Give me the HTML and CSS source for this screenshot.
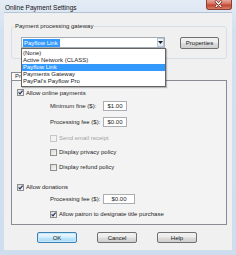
FILE: index.html
```html
<!DOCTYPE html>
<html>
<head>
<meta charset="utf-8">
<title>Online Payment Settings</title>
<link rel="stylesheet" href="styles.css">
</head>
<body>
<div class="window">
  <div class="titlebar">
    <span class="title">Online Payment Settings</span>
    <div class="close">
      <svg width="26" height="10" viewBox="0 0 26 10">
        <path d="M10.5 2.5 L15.5 7.5 M15.5 2.5 L10.5 7.5" stroke="#5a1a12" stroke-width="2.6" stroke-linecap="round"/>
        <path d="M10.5 2.5 L15.5 7.5 M15.5 2.5 L10.5 7.5" stroke="#ffffff" stroke-width="1.4" stroke-linecap="round"/>
      </svg>
    </div>
  </div>
  <div class="client">
    <fieldset class="group">
      <legend class="group-label">Payment processing gateway</legend>
      <div class="gw-row">
        <div class="combo">
          <div class="combo-field"><span class="combo-sel">Payflow Link</span></div>
          <div class="combo-btn">
            <svg width="5" height="3" viewBox="0 0 5 3"><path d="M0 0 H5 L2.5 3 Z" fill="#1b1b1b"/></svg>
          </div>
          <ul class="combo-list">
            <li>(None)</li>
            <li>Active Network (CLASS)</li>
            <li class="hl">Payflow Link</li>
            <li>Payments Gateway</li>
            <li>PayPal's Payflow Pro</li>
          </ul>
        </div>
        <button class="btn props">Properties</button>
      </div>
    </fieldset>

    <div class="tabs">
      <div class="tab-strip"><div class="tab">Processing</div></div>
      <div class="tab-body">
        <div class="row r-a">
          <span class="cb on"><svg width="5" height="5" viewBox="0 0 5 5"><path d="M0.6 2.4 L2 3.9 L4.6 0.6" fill="none" stroke="#1d2e5c" stroke-width="1.1"/></svg></span>
          <span class="lbl">Allow online payments</span>
        </div>
        <div class="row r-b indent">
          <span class="field-lbl">Minimum fine ($):</span>
          <span class="tb">$1.00</span>
        </div>
        <div class="row r-c indent">
          <span class="field-lbl">Processing fee ($):</span>
          <span class="tb">$0.00</span>
        </div>
        <div class="row r-d indent">
          <span class="cb disabled"></span>
          <span class="lbl muted">Send email receipt</span>
        </div>
        <div class="row r-e indent">
          <span class="cb"></span>
          <span class="lbl">Display privacy policy</span>
        </div>
        <div class="row r-f indent">
          <span class="cb"></span>
          <span class="lbl">Display refund policy</span>
        </div>
        <div class="row r-g">
          <span class="cb on"><svg width="5" height="5" viewBox="0 0 5 5"><path d="M0.6 2.4 L2 3.9 L4.6 0.6" fill="none" stroke="#1d2e5c" stroke-width="1.1"/></svg></span>
          <span class="lbl">Allow donations</span>
        </div>
        <div class="row r-h indent">
          <span class="field-lbl">Processing fee ($):</span>
          <span class="tb wide">$0.00</span>
        </div>
        <div class="row r-i indent">
          <span class="cb on"><svg width="5" height="5" viewBox="0 0 5 5"><path d="M0.6 2.4 L2 3.9 L4.6 0.6" fill="none" stroke="#1d2e5c" stroke-width="1.1"/></svg></span>
          <span class="lbl">Allow patron to designate title purchase</span>
        </div>
      </div>
    </div>

    <div class="buttons">
      <button class="btn default">OK</button>
      <button class="btn">Cancel</button>
      <button class="btn">Help</button>
    </div>
  </div>
</div>
</body>
</html>
```

FILE: styles.css
```css
html, body {
  margin: 0;
  padding: 0;
  background: #d3e1f0;
}

.window {
  width: 236px;
  height: 255px;
  display: flex;
  flex-direction: column;
  background: linear-gradient(#e4ecf5, #d3e1f0 30px, #cfdeee);
  font-family: "Liberation Sans", Arial, sans-serif;
  font-size: 6px;
  line-height: 8px;
  color: #1e1e1e;
  overflow: hidden;
}

.titlebar {
  height: 12px;
  flex: none;
  display: flex;
  align-items: flex-start;
  padding: 0 4px 0 5px;
}

.title {
  flex: 1;
  padding-top: 4px;
  font-size: 6.5px;
  line-height: 8px;
  color: #111;
}

.close {
  width: 26px;
  height: 10px;
  box-sizing: border-box;
  border: 1px solid #8c3f33;
  border-top: none;
  border-radius: 0 0 3px 3px;
  background: linear-gradient(#e8a99c, #d4705d 45%, #c2432d 55%, #d7806a);
  display: flex;
}

.close svg {
  margin-left: -1px;
  margin-top: -1px;
}

.client {
  flex: 1;
  margin: 0 4px 5px 4px;
  background: #f0f0f0;
  border-top: 1px solid #b4c4d6;
  display: flex;
  flex-direction: column;
}

/* Group box */
.group {
  margin: 9px 0 0 7px;
  width: 216px;
  box-sizing: border-box;
  padding: 7px 0 9px 2px;
  border: 1px solid #d5dfe5;
  border-radius: 3px;
  min-width: 0;
}

.group-label {
  padding: 0 1px;
  margin: 0;
  line-height: 8px;
  font-size: 6px;
}

.gw-row {
  display: flex;
  align-items: flex-start;
  margin-left: 7px;
  height: 12px;
}

.combo {
  position: relative;
  width: 144px;
  height: 11px;
  box-sizing: border-box;
  border: 1px solid #a6acb4;
  background: #fff;
  display: flex;
}

.combo-field {
  flex: 1;
  padding: 0 0 0 1px;
  display: flex;
  align-items: center;
}

.combo-sel {
  background: #3399ff;
  color: #fff;
  padding: 0 2px 0 1px;
  line-height: 8px;
}

.combo-btn {
  width: 7px;
  margin: 0;
  box-sizing: border-box;
  border: 1px solid #b7c8da;
  background: linear-gradient(#f6f9fc, #dfe8f2);
  display: flex;
  align-items: center;
  justify-content: center;
}

.combo-list {
  position: absolute;
  top: 10px;
  left: -1px;
  width: 145px;
  box-sizing: border-box;
  margin: 0;
  padding: 1px 0 1px;
  list-style: none;
  background: #fff;
  border: 1px solid #646464;
  box-shadow: 1px 1px 1px rgba(0, 0, 0, 0.25);
  z-index: 5;
}

.combo-list li {
  height: 7px;
  line-height: 7px;
  padding-left: 1px;
  color: #1a1a1a;
}

.combo-list li.hl {
  background: #3399ff;
  color: #fff;
}

.btn {
  height: 11px;
  width: 40px;
  box-sizing: border-box;
  padding: 0;
  margin: 0;
  border: 1px solid #707070;
  border-radius: 2px;
  background: linear-gradient(#f2f2f2 0%, #ebebeb 48%, #dddddd 52%, #cfcfcf 100%);
  font-family: "Liberation Sans", Arial, sans-serif;
  font-size: 6px;
  line-height: 8px;
  color: #1a1a1a;
}

.btn.props {
  margin-left: 15px;
  width: 39px;
  height: 12px;
}

.btn.default {
  border-color: #3c7fb1;
  background: linear-gradient(#eaf6fd 0%, #d9f0fc 48%, #bee6fd 52%, #a7d9f5 100%);
  box-shadow: inset 0 0 0 1px #c8e8fb;
}

/* Tabs */
.tabs {
  margin: 13px 0 0 7px;
  width: 216px;
}

.tab-strip {
  height: 8px;
  display: flex;
}

.tab {
  width: 45px;
  height: 8px;
  box-sizing: border-box;
  border: 1px solid #898c95;
  border-bottom: none;
  background: #fbfbfb;
  padding-left: 3px;
  line-height: 7px;
}

.tab-body {
  height: 145px;
  box-sizing: border-box;
  border: 1px solid #898c95;
  background: #f3f3f3;
  padding: 7px 0 0 5px;
}

.row {
  display: flex;
  align-items: center;
  height: 8px;
}

.row.indent {
  margin-left: 33px;
}

.r-a { height: 9px; }
.r-b { margin-top: 4px; height: 10px; }
.r-c { margin-top: 6px; height: 10px; }
.r-d { margin-top: 7px; }
.r-e { margin-top: 6px; }
.r-f { margin-top: 7px; }
.r-g { margin-top: 12px; }
.r-h { margin-top: 3px; height: 10px; }
.r-i { margin-top: 6px; }

.cb {
  width: 7px;
  height: 7px;
  box-sizing: border-box;
  border: 1px solid #8e8f8f;
  background: linear-gradient(135deg, #d8d8d8, #f7f7f7);
  display: flex;
  align-items: center;
  justify-content: center;
  flex: none;
}

.cb.disabled {
  border-color: #c6c6c6;
  background: #f2f2f2;
}

.lbl {
  margin-left: 2px;
  white-space: nowrap;
}

.lbl.muted {
  color: #a3a3a3;
}

.field-lbl {
  width: 53px;
  white-space: nowrap;
}

.tb {
  width: 24px;
  height: 10px;
  box-sizing: border-box;
  border: 1px solid #abadb3;
  background: #fff;
  text-align: center;
  line-height: 8px;
}

.tb.wide {
  width: 32px;
}

.buttons {
  margin-top: 7px;
  padding-left: 33px;
  display: flex;
  gap: 20px;
}
```
